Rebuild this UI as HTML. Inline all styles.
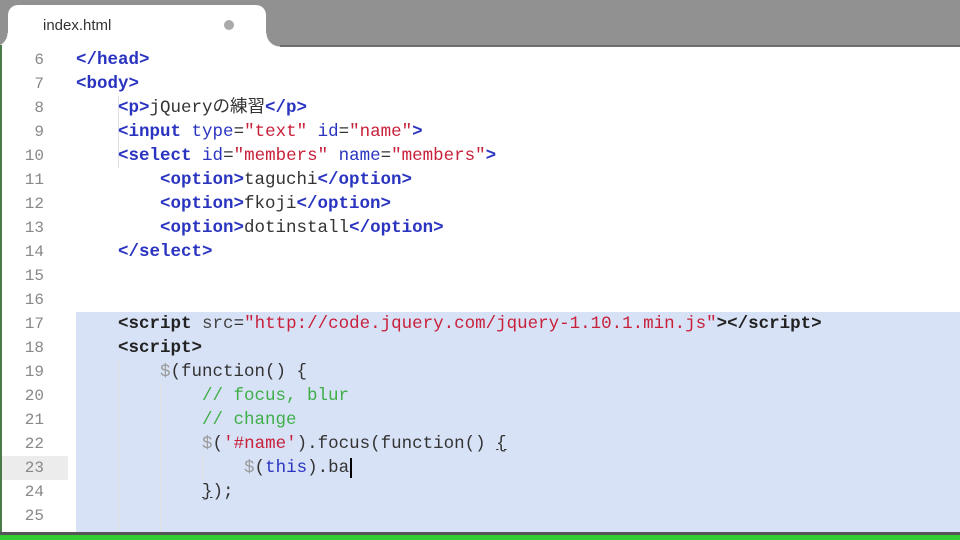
<!DOCTYPE html>
<html><head><meta charset="utf-8"><style>
body{margin:0;width:960px;height:540px;overflow:hidden;background:#fff;position:relative;font-family:"Liberation Mono","Noto Sans CJK JP",monospace;}
.bar{position:absolute;left:0;top:0;width:960px;height:45px;background:#919191;border-bottom:2px solid #6e6e6e;}
.tab{position:absolute;left:8px;top:5px;width:258px;height:42px;background:#fff;border-radius:10px 10px 0 0;}
.tab:before{content:"";position:absolute;left:-14px;bottom:0;width:14px;height:14px;background:radial-gradient(circle at 0 0,#919191 13px,#fff 14px);}
.tab:after{content:"";position:absolute;right:-14px;bottom:0;width:14px;height:14px;background:radial-gradient(circle at 100% 0,#919191 13px,#fff 14px);}
.tabt{position:absolute;left:35px;top:12px;font:15px "Liberation Sans",sans-serif;color:#333;}
.dot{position:absolute;left:216px;top:15px;width:10px;height:10px;border-radius:50%;background:#aaa;}
.sel{position:absolute;left:76px;top:312px;width:884px;height:220px;background:#d8e2f6;}
.cur{position:absolute;left:0;top:456px;width:68px;height:24px;background:#ececec;}
.guide{position:absolute;width:1px;background:#e0e0e0;}
.ln{position:absolute;left:0;width:44px;text-align:right;color:#888;font-size:16px;}
.code{position:absolute;left:76px;font-size:17.5px;color:#333;}
.l{height:24px;line-height:24px;white-space:pre;}
.t{color:#2a34c0;font-weight:bold}.k{color:#222;font-weight:bold}
.s{color:#c8203a}.c{color:#3fae49}.g{color:#999}.b{color:#2a34c0}.a{color:#444}
.bot{position:absolute;left:0;top:532px;width:960px;height:3px;background:#555;}
.grn{position:absolute;left:0;top:535px;width:960px;height:5px;background:#3c3;}
.lft{position:absolute;left:0;top:45px;width:2px;height:490px;background:#4a7a4a;}
</style></head><body>
<div class="bar"></div>
<div class="tab"><div class="tabt">index.html</div><div class="dot"></div></div>
<div class="sel"></div>
<div class="cur"></div>
<div class="guide" style="left:118px;top:96px;height:72px"></div>
<div class="guide" style="left:118px;top:360px;height:172px"></div>
<div class="guide" style="left:160px;top:384px;height:148px"></div>
<div class="guide" style="left:202px;top:456px;height:24px"></div>
<div class="lft"></div>
<div class="ln" style="top:48px"><div class="l">6</div><div class="l">7</div><div class="l">8</div><div class="l">9</div><div class="l">10</div><div class="l">11</div><div class="l">12</div><div class="l">13</div><div class="l">14</div><div class="l">15</div><div class="l">16</div><div class="l">17</div><div class="l">18</div><div class="l">19</div><div class="l">20</div><div class="l">21</div><div class="l">22</div><div class="l">23</div><div class="l">24</div><div class="l">25</div></div>
<div class="code" style="top:48px"><div class="l"><span class="t">&lt;/head&gt;</span></div><div class="l"><span class="t">&lt;body&gt;</span></div><div class="l">    <span class="t">&lt;p&gt;</span>jQueryの練習<span class="t">&lt;/p&gt;</span></div><div class="l">    <span class="t">&lt;input</span> <span class="b">type</span>=<span class="s">"text"</span> <span class="b">id</span>=<span class="s">"name"</span><span class="t">&gt;</span></div><div class="l">    <span class="t">&lt;select</span> <span class="b">id</span>=<span class="s">"members"</span> <span class="b">name</span>=<span class="s">"members"</span><span class="t">&gt;</span></div><div class="l">        <span class="t">&lt;option&gt;</span>taguchi<span class="t">&lt;/option&gt;</span></div><div class="l">        <span class="t">&lt;option&gt;</span>fkoji<span class="t">&lt;/option&gt;</span></div><div class="l">        <span class="t">&lt;option&gt;</span>dotinstall<span class="t">&lt;/option&gt;</span></div><div class="l">    <span class="t">&lt;/select&gt;</span></div><div class="l"> </div><div class="l"> </div><div class="l">    <span class="k">&lt;script</span> <span class="a">src</span>=<span class="s">"http://code.jquery.com/jquery-1.10.1.min.js"</span><span class="k">&gt;&lt;/script&gt;</span></div><div class="l">    <span class="k">&lt;script&gt;</span></div><div class="l">        <span class="g">$</span>(function() {</div><div class="l">            <span class="c">// focus, blur</span></div><div class="l">            <span class="c">// change</span></div><div class="l">            <span class="g">$</span>(<span class="s">'#name'</span>).focus(function() <u>{</u></div><div class="l">                <span class="g">$</span>(<span class="b">this</span>).ba<span style="border-left:2px solid #000;margin-left:1px"></span></div><div class="l">            <u>}</u>);</div><div class="l"> </div></div>
<div class="bot"></div><div class="grn"></div>
</body></html>
